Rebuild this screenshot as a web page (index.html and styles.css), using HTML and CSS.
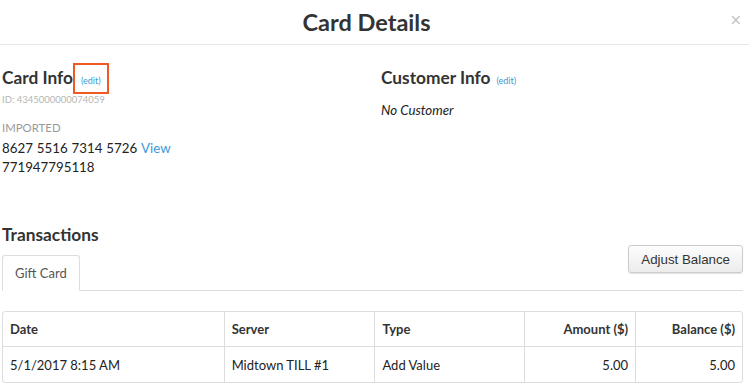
FILE: index.html
```html
<!DOCTYPE html>
<html>
<head>
<meta charset="utf-8">
<link rel="stylesheet" href="styles.css">
</head>
<body>
<div class="modal">
  <div class="modal-header">
    <h1 class="title">Card Details</h1>
    <span class="close">×</span>
  </div>
  <div class="modal-body">
    <div class="info-row">
      <div class="info-col">
        <h2 class="section-title">Card Info <span class="edit edit-boxed">(edit)</span></h2>
        <div class="card-id">ID: 4345000000074059</div>
        <div class="imported">IMPORTED</div>
        <div class="line line-first">8627 5516 7314 5726 <span class="link">View</span></div>
        <div class="line">771947795118</div>
      </div>
      <div class="info-col info-col-right">
        <h2 class="section-title">Customer Info <span class="edit">(edit)</span></h2>
        <div class="no-customer">No Customer</div>
      </div>
    </div>
    <h2 class="section-title tx-title">Transactions</h2>
    <div class="tab-bar">
      <div class="tab">Gift Card</div>
      <button class="btn">Adjust Balance</button>
    </div>
    <table class="tx-table">
      <thead>
        <tr>
          <th class="c-date">Date</th>
          <th class="c-server">Server</th>
          <th class="c-type">Type</th>
          <th class="c-amt num">Amount ($)</th>
          <th class="c-bal num">Balance ($)</th>
        </tr>
      </thead>
      <tbody>
        <tr>
          <td>5/1/2017 8:15 AM</td>
          <td>Midtown TILL #1</td>
          <td>Add Value</td>
          <td class="num">5.00</td>
          <td class="num">5.00</td>
        </tr>
      </tbody>
    </table>
  </div>
</div>
</body>
</html>
```
FILE: styles.css
```css
html, body {
  margin: 0;
  padding: 0;
  background: #fff;
}
body {
  font-family: Lato, "Noto Sans", sans-serif;
  color: #333;
  width: 749px;
  height: 386px;
  overflow: hidden;
}
.modal-header {
  position: relative;
  height: 44px;
  border-bottom: 1px solid #e8e8e8;
  display: flex;
  align-items: center;
  justify-content: center;
}
.title {
  margin: 0;
  font-size: 23.5px;
  font-weight: 700;
  color: #333;
  line-height: 28px;
  position: relative;
  left: -8px;
}
.close {
  position: absolute;
  right: 7px;
  top: 11px;
  font-size: 15px;
  color: #c4c4c4;
  font-family: "DejaVu Sans", sans-serif;
}
.modal-body {
  padding: 0 6px 0 2px;
}
.info-row {
  display: flex;
  padding-top: 22px;
}
.info-col {
  flex: 0 0 379px;
}
.info-col-right {
  flex: 1 1 auto;
}
.section-title {
  margin: 0;
  font-size: 17.3px;
  font-weight: 700;
  color: #333;
  line-height: 22px;
  display: flex;
  align-items: center;
}
.edit {
  font-size: 9px;
  font-weight: 400;
  color: #3a9ad9;
  margin-left: 6px;
  line-height: 11px;
  position: relative;
  top: 2px;
}
.edit-boxed {
  border: 2px solid #f05a22;
  padding: 10px 6px 6px 6px;
  margin: -13px 0 -13px 0;
  top: 0;
  line-height: 11px;
}
.card-id {
  font-size: 9.5px;
  color: #b5b5b5;
  margin-top: 5px;
  line-height: 12px;
}
.imported {
  font-size: 11.4px;
  color: #999;
  margin-top: 15px;
  line-height: 14px;
}
.line {
  font-size: 13.3px;
  line-height: 19px;
  color: #222;
}
.line-first {
  margin-top: 4px;
  word-spacing: 0.5px;
}
.link {
  color: #3a9ad9;
  word-spacing: 0;
}
.no-customer {
  font-size: 13.3px;
  font-style: italic;
  color: #222;
  line-height: 16px;
  margin-top: 13px;
}
.tx-title {
  margin-top: 47px;
}
.tab-bar {
  display: flex;
  justify-content: space-between;
  align-items: flex-end;
  border-bottom: 1px solid #ddd;
  height: 35px;
  margin-top: 9px;
}
.tab {
  font-size: 13px;
  color: #555;
  border: 1px solid #ddd;
  border-bottom: 1px solid #fff;
  border-radius: 3px 3px 0 0;
  padding: 0 12px;
  line-height: 34px;
  margin-bottom: -1px;
  box-sizing: border-box;
  height: 36px;
}
.btn {
  align-self: flex-start;
  margin-top: -10px;
  font-family: "Liberation Sans", Arial, sans-serif;
  font-size: 13.3px;
  color: #333;
  background: linear-gradient(#fdfdfd, #ececec);
  border: 1px solid #ccc;
  border-radius: 3px;
  box-shadow: 0 1px 1px rgba(0,0,0,0.12);
  height: 28px;
  padding: 0 12px;
}
.tx-table {
  margin-top: 20px;
  width: 741px;
  border-collapse: separate;
  border-spacing: 0;
  border: 1px solid #ddd;
  border-radius: 3px;
  font-size: 13px;
  color: #222;
}
.tx-table th, .tx-table td {
  text-align: left;
  padding: 0 7px;
  height: 35px;
  border-left: 1px solid #ddd;
}
.tx-table th {
  height: 34px;
}
.tx-table th:first-child, .tx-table td:first-child {
  border-left: none;
}
.tx-table th {
  font-weight: 700;
  color: #333;
  border-bottom: 1px solid #ddd;
}
.tx-table td {
  font-weight: 400;
}
.tx-table .num {
  text-align: right;
}
.c-date { width: 207px; }
.c-server { width: 136px; }
.c-type { width: 135px; }
.c-amt { width: 96px; }
.c-bal { width: 92px; }
```
